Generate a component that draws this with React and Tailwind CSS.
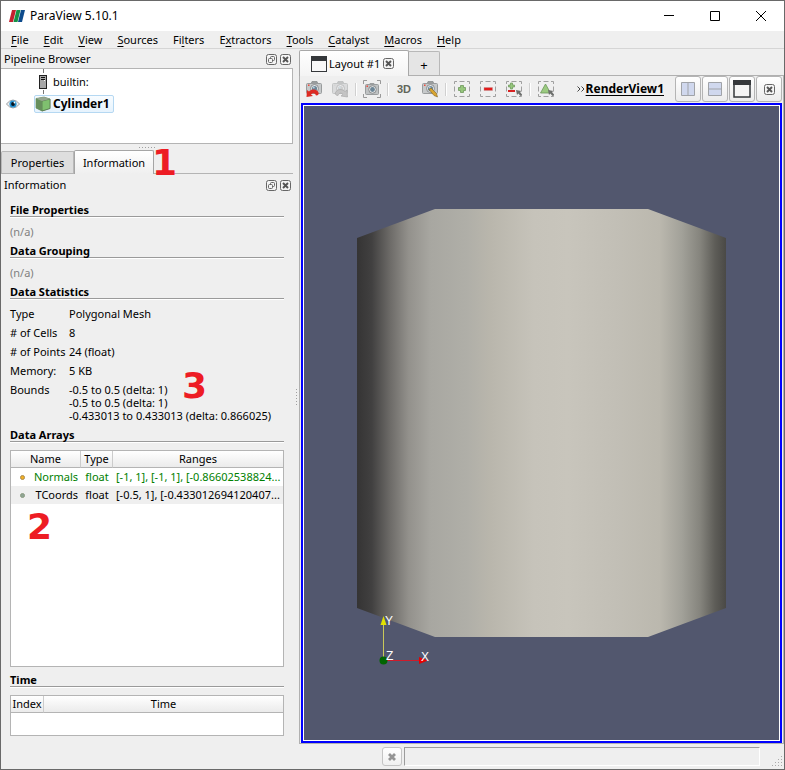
import React from 'react';

const menus = [
  ['', 'F', 'ile'],
  ['', 'E', 'dit'],
  ['', 'V', 'iew'],
  ['', 'S', 'ources'],
  ['Fi', 'l', 'ters'],
  ['E', 'x', 'tractors'],
  ['', 'T', 'ools'],
  ['', 'C', 'atalyst'],
  ['', 'M', 'acros'],
  ['', 'H', 'elp'],
];

const stats = [
  ['Type', 'Polygonal Mesh'],
  ['# of Cells', '8'],
  ['# of Points', '24 (float)'],
  ['Memory:', '5 KB'],
];

function CloseGlyph({ className = '' }) {
  return (
    <svg viewBox="0 0 11 11" className={`block size-[11px] ${className}`} aria-hidden="true">
      <rect x="0.5" y="0.5" width="10" height="10" rx="2" fill="#f4f4f4" stroke="#666" />
      <path d="M3 3l5 5M8 3l-5 5" stroke="#555" strokeWidth="1.9" />
    </svg>
  );
}

function FloatGlyph() {
  return (
    <svg viewBox="0 0 11 11" className="block size-[11px]" aria-hidden="true">
      <rect x="0.5" y="0.5" width="10" height="10" rx="2" fill="#f4f4f4" stroke="#666" />
      <rect x="4.5" y="2.5" width="4" height="4" rx="1" fill="none" stroke="#666" />
      <rect x="2.5" y="4.5" width="4" height="4" rx="1" fill="#f4f4f4" stroke="#666" />
    </svg>
  );
}

function DockTitle({ children }) {
  return (
    <div className="flex h-[18px] items-center pl-[3px] pr-0.5">
      <h2 className="flex-1">{children}</h2>
      <button aria-label={`Float ${children}`} className="mr-[3px]"><FloatGlyph /></button>
      <button aria-label={`Close ${children}`}><CloseGlyph /></button>
    </div>
  );
}

function Section({ children }) {
  return (
    <h3 className="h-[15px] shrink-0 border-b border-[#9a9a9a] text-[11px] leading-[16px] font-bold shadow-[0_1px_0_#fff]">
      {children}
    </h3>
  );
}

function Camera({ children, faded }) {
  return (
    <svg viewBox="0 0 18 18" className="size-[18px]" aria-hidden="true">
      <g opacity={faded ? 0.5 : 1}>
        <path d="M6 4l1-2.500h5l1 2.500z" fill="#9a9d9e" stroke="#838687" strokeWidth=".7" />
        <rect x="1.500" y="3.500" width="15" height="10" rx="1" fill="#c6c9ca" stroke="#999c9d" />
        <path d="M3 4.500h1.500V6H3z" fill={faded ? '#bbb' : '#ef4b3d'} />
        <circle cx="9.500" cy="8.500" r="4" fill="#e5e7e8" stroke="#8b8e8f" />
        <circle cx="9.500" cy="8.500" r="2.600" fill={faded ? '#aeb0b1' : '#6c8697'} />
        <circle cx="8.700" cy="7.600" r="1" fill="#b6d0df" />
      </g>
      {children}
    </svg>
  );
}

function Dashed({ children }) {
  return (
    <svg viewBox="0 0 16 16" className="size-[16px]" aria-hidden="true">
      <path
        d="M.5 3V.5H3M5.500 .5h5M13 .5h2.500V3M15.500 5.500v5M15.500 13v2.500H13M10.500 15.500h-5M3 15.500H.5V13M.5 10.500v-5"
        fill="none"
        stroke="#a0a0a0"
      />
      {children}
    </svg>
  );
}

function Tool({ label, children }) {
  return (
    <button aria-label={label} className="flex h-[26px] w-[26px] shrink-0 items-center justify-center">
      {children}
    </button>
  );
}

function Sep() {
  return <div className="mx-[2px] h-[13px] w-[2px] shrink-0 self-center border-l border-[#d0d0d0] bg-white" />;
}

function ViewButton({ label, children }) {
  return (
    <button
      aria-label={label}
      className="flex size-[26px] shrink-0 items-center justify-center rounded-[3px] border border-[#b4b4b4] bg-linear-to-b from-white to-[#ececec]"
    >
      {children}
    </button>
  );
}

function WindowGlyph() {
  return (
    <svg viewBox="0 0 18 18" className="size-[18px]" aria-hidden="true">
      <rect x="1" y="1" width="16" height="16" fill="#f5f5f5" stroke="#35383b" strokeWidth="1.500" />
      <path d="M0 0h18v5H0z" fill="#35383b" />
    </svg>
  );
}

function Grip({ vertical }) {
  return (
    <div className={vertical ? 'flex flex-col gap-[2px]' : 'flex gap-[2px]'}>
      {[0, 1, 2, 3, 4, 5].map((i) => (
        <span key={i} className="size-px bg-[#a0a0a0]" />
      ))}
    </div>
  );
}

const headCell =
  'h-[17px] border-b border-[#b4b4b4] bg-linear-to-b from-white to-[#ebebeb] p-0 text-center font-normal';
const mark = 'pointer-events-none absolute font-["DejaVu_Sans",sans-serif] text-[36px] leading-8 font-bold text-[#ed1c24]';

function TitleBar() {
  return (
    <header className="flex h-[30px] shrink-0 items-center bg-white pl-2">
      <svg viewBox="0 0 16 12" className="h-[12px] w-[16px]" aria-hidden="true">
        <path d="M3 0h4L4 12H0z" fill="#c3202f" />
        <path d="M7.500 0h4l-3 12h-4z" fill="#159347" />
        <path d="M12 0h4l-3 12H9z" fill="#0e4b8c" />
      </svg>
      <h1 className="ml-[5px] flex-1 text-[12px]">ParaView 5.10.1</h1>
      <button aria-label="Minimize" className="flex h-full w-[46px] items-center justify-center">
        <svg viewBox="0 0 10 10" className="size-[10px]"><path d="M0 4.500h10" stroke="#000" /></svg>
      </button>
      <button aria-label="Maximize" className="flex h-full w-[46px] items-center justify-center">
        <svg viewBox="0 0 10 10" className="size-[10px]"><path d="M.5.5h9v9h-9z" fill="none" stroke="#000" /></svg>
      </button>
      <button aria-label="Close" className="flex h-full w-[46px] items-center justify-center">
        <svg viewBox="0 0 10 10" className="size-[10px]"><path d="M0 0l10 10M10 0L0 10" stroke="#000" /></svg>
      </button>
    </header>
  );
}

function PipelineBrowser() {
  return (
    <section className="h-[76px] border border-[#b4b4b4] border-l-0 bg-white">
      <ul>
        <li className="flex h-[25px] flex-col pl-[33px]">
          <div className="ml-[9px] h-[4px] w-px shrink-0 bg-[#777]" />
          <div className="flex h-[17px] shrink-0 items-center">
            <svg viewBox="0 0 8 14" className="ml-[5px] h-[14px] w-[8px]" aria-hidden="true">
              <rect x=".5" y=".5" width="7" height="13" fill="#a8a8a8" stroke="#222" />
              <path d="M2 2.500h4M2 4.500h4" stroke="#111" />
              <path d="M5 5.500h1" stroke="#fff" />
            </svg>
            <span className="ml-[6px]">builtin:</span>
          </div>
          <div className="ml-[9px] h-[4px] w-px shrink-0 bg-[#777]" />
        </li>
        <li className="flex h-[19px] items-center">
          <button aria-label="Toggle visibility" className="ml-[5px]">
            <svg viewBox="0 0 14 10" className="block h-[10px] w-[14px]" aria-hidden="true">
              <path d="M.4 5Q7-3 13.600 5Q7 13 .4 5z" fill="#eef0f1" stroke="#888c90" strokeWidth=".8" />
              <circle cx="7" cy="5" r="3.600" fill="#2490cf" />
              <circle cx="7" cy="5" r="1.900" fill="#06121c" />
              <circle cx="8.500" cy="3.500" r=".9" fill="#fff" />
            </svg>
          </button>
          <div className="ml-[14px] flex h-[18px] items-center rounded-[2px] border border-[#b5d8f2] bg-linear-to-b from-[#f8fcff] to-[#e6f3fd] pr-[3px]">
            <svg viewBox="0 0 16 16" className="size-[16px]" aria-hidden="true">
              <path d="M1 2.500L9 1l6 2v9.500L7 15l-6-3z" fill="#71a764" stroke="#5d7d55" strokeWidth=".6" />
              <path d="M7 5l8-2v9.500L7 15z" fill="#7fc06f" stroke="#536f4c" strokeWidth=".7" />
              <path d="M1 2.500L7 5v10l-6-3z" fill="#668f5c" />
              <path d="M1 2.500L9 1l6 2-8 2z" fill="#96a58f" />
            </svg>
            <span className="ml-[2px] text-[12px] font-bold">Cylinder1</span>
          </div>
        </li>
      </ul>
    </section>
  );
}

function ArrayRow({ name, range, tone, dot }) {
  return (
    <tr className={`h-[18px] ${tone}`}>
      <td className="p-0">
        <div className="flex items-center justify-between pr-[3px] pl-[9px]">
          <span className={`size-[5px] rounded-full border ${dot}`} />
          {name}
        </div>
      </td>
      <td className="p-0 text-center">float</td>
      <td className="p-0 pl-[3px] whitespace-nowrap">{range}</td>
    </tr>
  );
}

function InformationPanel() {
  return (
    <section className="flex min-h-0 flex-1 flex-col px-[9px] pt-[8px] pb-[8px]">
      <Section>File Properties</Section>
      <p className="h-[26px] shrink-0 pt-[7px] leading-[15px] text-[#808080]">(n/a)</p>
      <Section>Data Grouping</Section>
      <p className="h-[26px] shrink-0 pt-[7px] leading-[15px] text-[#808080]">(n/a)</p>
      <Section>Data Statistics</Section>
      <div className="relative my-[5px] shrink-0">
        <dl className="grid grid-cols-[59px_1fr] leading-[19px]">
          {stats.map(([k, v]) => (
            <React.Fragment key={k}>
              <dt className="whitespace-nowrap">{k}</dt>
              <dd>{v}</dd>
            </React.Fragment>
          ))}
          <dt>Bounds</dt>
          <dd className="pt-[3px] leading-[13px]">
            -0.5 to 0.5 (delta: 1)
            <br />
            -0.5 to 0.5 (delta: 1)
            <br />
            -0.433013 to 0.433013 (delta: 0.866025)
          </dd>
        </dl>
        <span className={`${mark} top-[66px] left-[172px]`}>3</span>
      </div>
      <Section>Data Arrays</Section>
      <div className="relative mt-[8px] mb-[5px] min-h-0 flex-1 border border-[#b4b4b4] bg-white">
        <table className="w-full table-fixed border-separate border-spacing-0">
          <colgroup>
            <col className="w-[70px]" />
            <col className="w-[32px]" />
            <col />
          </colgroup>
          <thead>
            <tr>
              <th className={`${headCell} border-r border-r-[#ccc]`}>Name</th>
              <th className={`${headCell} border-r border-r-[#ccc]`}>Type</th>
              <th className={headCell}>Ranges</th>
            </tr>
          </thead>
          <tbody>
            <ArrayRow
              name="Normals"
              range="[-1, 1], [-1, 1], [-0.86602538824..."
              tone="text-[#008000]"
              dot="border-[#a88a50] bg-[#f3b021]"
            />
            <ArrayRow
              name="TCoords"
              range="[-0.5, 1], [-0.433012694120407..."
              tone="bg-[#efefef]"
              dot="border-[#8a9a80] bg-[#8fa595]"
            />
          </tbody>
        </table>
        <span className={`${mark} top-[60px] left-[16px]`}>2</span>
      </div>
      <Section>Time</Section>
      <div className="mt-[8px] h-[41px] shrink-0 border border-[#b4b4b4] bg-white">
        <table className="w-full table-fixed border-separate border-spacing-0">
          <thead>
            <tr>
              <th className={`${headCell} w-[33px] border-r border-r-[#ccc]`}>Index</th>
              <th className={headCell}>Time</th>
            </tr>
          </thead>
        </table>
      </div>
    </section>
  );
}

function Pointer() {
  return <path d="M10 9l5.500 1-1.500 1 2 2.500-1.500 1.500-2.200-2.500L11 14z" fill="#6d6f6d" />;
}

function ViewToolbar() {
  return (
    <div className="flex h-[27px] shrink-0 items-start pr-px">
      <Tool label="Undo camera">
        <Camera>
          <path d="M2 10l-.5 7 6.500-1-2-1.500c2-2 4-1.500 5 1 2.500 0 3-1.500 2.500-3-1.500-3.500-6.500-4-9.500-1z" fill="#dd2a22" />
        </Camera>
      </Tool>
      <Tool label="Redo camera">
        <Camera faded>
          <path d="M16 10l.5 7-6.500-1 2-1.500c-2-2-4-1.500-5 1-2.500 0-3-1.500-2.500-3 1.500-3.500 6.500-4 9.500-1z" fill="#c4c4c4" stroke="#a5a5a5" strokeWidth=".6" />
        </Camera>
      </Tool>
      <Sep />
      <Tool label="Capture screenshot">
        <svg viewBox="0 0 18 18" className="size-[18px]" aria-hidden="true">
          <path d="M.5 4V.5H4M14 .5h3.500V4M.5 14v3.500H4M14 17.500h3.500V14" fill="none" stroke="#999" />
          <path d="M6 5l1-2h4l1 2z" fill="#9a9d9e" />
          <rect x="2.500" y="4.500" width="13" height="10" rx="1" fill="#bfc2c3" stroke="#999c9d" />
          <path d="M3.500 5.500h1.500V7H3.500z" fill="#ef4b3d" />
          <circle cx="9.500" cy="9.500" r="3.800" fill="#e5e7e8" stroke="#8b8e8f" />
          <circle cx="9.500" cy="9.500" r="2.400" fill="#6c8697" />
        </svg>
      </Tool>
      <Sep />
      <Tool label="Change interaction mode">
        <span className='font-["Liberation_Sans",sans-serif] text-[11px] font-bold text-[#62665a]'>3D</span>
      </Tool>
      <Tool label="Adjust camera">
        <Camera>
          <path d="M8 9.500L10 8l5.500 5.500 1 3.500-3.500-1.500z" fill="#d9a52f" stroke="#806326" strokeWidth=".6" />
        </Camera>
      </Tool>
      <Sep />
      <Tool label="Add selection">
        <Dashed><path d="M6.500 4.500h3v2h2v3h-2v2h-3v-2h-2v-3h2z" fill="#96c77c" stroke="#6c975a" strokeWidth=".8" /></Dashed>
      </Tool>
      <Tool label="Subtract selection">
        <Dashed><path d="M4 6.500h8.500v3H4z" fill="#e21b1b" stroke="#b99" strokeWidth=".4" /></Dashed>
      </Tool>
      <Tool label="Toggle selection">
        <Dashed>
          <path d="M4.500 2h2v2h2v2h-2v2h-2V6h-2V4h2z" fill="#96c77c" stroke="#6c975a" strokeWidth=".7" />
          <path d="M2 9h7v2H2z" fill="#d82222" />
          <Pointer />
        </Dashed>
      </Tool>
      <Sep />
      <Tool label="Interactive select">
        <Dashed>
          <path d="M7.500 3l5 9h-10z" fill="#9bca80" stroke="#6c975a" strokeWidth=".8" />
          <Pointer />
        </Dashed>
      </Tool>
      <div className="flex h-[26px] flex-1 items-center justify-end pr-[11px]">
        <svg viewBox="0 0 8 6" className="mr-px h-[6px] w-[8px]" aria-hidden="true">
          <path d="M.5.5L3 3 .5 5.500M4.500.5L7 3 4.500 5.500" fill="none" stroke="#444" />
        </svg>
        <button className="text-[12px] leading-4 font-bold underline underline-offset-2">RenderView1</button>
      </div>
      <div className="flex gap-px">
        <ViewButton label="Split horizontally">
          <svg viewBox="0 0 14 14" className="size-[14px]"><path d="M.5.5h13v13H.5zM7 1v12" fill="#d0d8ee" stroke="#a0a3a8" /></svg>
        </ViewButton>
        <ViewButton label="Split vertically">
          <svg viewBox="0 0 14 14" className="size-[14px]"><path d="M.5.5h13v13H.5zM1 7h12" fill="#d0d8ee" stroke="#a0a3a8" /></svg>
        </ViewButton>
        <ViewButton label="Maximize view"><WindowGlyph /></ViewButton>
        <ViewButton label="Close view"><CloseGlyph /></ViewButton>
      </div>
    </div>
  );
}

function RenderView() {
  return (
    <div className="mr-px min-h-0 flex-1 border-2 border-[#0000fe] bg-white p-px">
      <svg viewBox="304 106 475 634" className="block h-full w-full bg-[#52576e]" role="img" aria-label="Cylinder render">
        <defs>
          <linearGradient id="shade">
            <stop offset="0" stopColor="#353434" />
            <stop offset=".04" stopColor="#414040" />
            <stop offset=".09" stopColor="#6d6b68" />
            <stop offset=".14" stopColor="#93918c" />
            <stop offset=".2" stopColor="#a8a7a1" />
            <stop offset=".3" stopColor="#b0afa8" />
            <stop offset=".36" stopColor="#b9b6ac" />
            <stop offset=".48" stopColor="#c6c3ba" />
            <stop offset=".57" stopColor="#c8c5bc" />
            <stop offset=".7" stopColor="#c2bfb6" />
            <stop offset=".82" stopColor="#bbb8ae" />
            <stop offset=".88" stopColor="#a2a199" />
            <stop offset=".93" stopColor="#85847d" />
            <stop offset=".97" stopColor="#5e5d58" />
            <stop offset="1" stopColor="#4a4946" />
          </linearGradient>
        </defs>
        <path d="M357 238L435 209H648L726 238V608L648 637H435L357 608z" fill="url(#shade)" />
        <path d="M383.500 658V625" stroke="#c9c85a" />
        <path d="M380.500 625l3-9 3 9z" fill="#e2e200" />
        <path d="M386 660.500h34" stroke="#d01b2b" />
        <path d="M419 657l9 3.500-9 3.500z" fill="#e60000" />
        <circle cx="383.500" cy="660.500" r="4" fill="#006400" />
        <g fill="#fff" fontFamily="Liberation Sans, sans-serif" fontSize="12">
          <text x="385" y="625">Y</text>
          <text x="386" y="660">Z</text>
          <text x="421" y="661">X</text>
        </g>
      </svg>
    </div>
  );
}

export default function App() {
  return (
    <div className='flex h-screen flex-col border border-[#696969] bg-[#efefef] font-["Noto_Sans",sans-serif] text-[11px] leading-[14px] text-black'>
      <TitleBar />
      <nav className="flex h-[18px] shrink-0 items-center gap-[15px] border-b border-[#d5d5d5] pl-[10px]">
        {menus.map(([a, b, c]) => (
          <button key={b + c} className="whitespace-nowrap">
            {a}<span className="underline underline-offset-2">{b}</span>{c}
          </button>
        ))}
      </nav>
      <main className="flex min-h-0 flex-1">
        <aside className="flex w-[292px] shrink-0 flex-col pt-px">
          <DockTitle>Pipeline Browser</DockTitle>
          <PipelineBrowser />
          <div className="flex h-[6px] items-center justify-center"><Grip /></div>
          <div className="relative flex h-[24px] shrink-0 items-end border-b border-[#b4b4b4]" role="tablist">
            <button role="tab" aria-selected="false" className="h-[22px] w-[73px] rounded-tl-[2px] border border-b-0 border-[#b8b8b8] bg-[#dedede] pt-px">Properties</button>
            <button role="tab" aria-selected="true" className="-mb-px h-[24px] w-[80px] rounded-t-[2px] border border-b-0 border-[#a5a5a5] bg-linear-to-b from-white to-[#efefef]">Information</button>
            <span className={`${mark} -top-[3px] left-[151px]`}>1</span>
          </div>
          <div className="pt-[2px]"><DockTitle>Information</DockTitle></div>
          <InformationPanel />
        </aside>
        <div className="flex w-[6px] shrink-0 items-center justify-center"><Grip vertical /></div>
        <div className="flex min-w-0 flex-1 flex-col pt-px">
          <div className="flex h-[26px] shrink-0 items-end border-b border-[#b0b0b0]">
            <div className="-mb-px flex h-[26px] w-[110px] items-center rounded-t-[2px] border border-b-0 border-[#a8a8a8] bg-linear-to-b from-white to-[#f4f4f4] pl-[11px]">
              <svg viewBox="0 0 16 16" className="size-[16px]" aria-hidden="true">
                <rect x=".5" y=".5" width="15" height="15" fill="#f8f8f8" stroke="#35383b" />
                <path d="M0 0h16v5H0z" fill="#35383b" />
              </svg>
              <button className="ml-[2px] text-[11px] whitespace-nowrap">Layout #1</button>
              <button aria-label="Close layout" className="ml-[3px]"><CloseGlyph /></button>
            </div>
            <button aria-label="New layout" className="h-[24px] w-[31px] rounded-tr-[2px] border border-b-0 border-l-0 border-[#b8b8b8] bg-[#e5e5e5] pt-[2px] text-[13px]">+</button>
          </div>
          <div className="flex min-h-0 flex-1 flex-col border-r border-b border-l border-[#b0b0b0] pl-px">
            <ViewToolbar />
            <RenderView />
          </div>
        </div>
      </main>
      <footer className="flex h-[25px] shrink-0 items-center pl-[381px]">
        <button aria-label="Abort" className="flex h-[19px] w-[20px] shrink-0 items-center justify-center rounded-[3px] border border-[#c4c4c4] bg-linear-to-b from-white to-[#f0f0f0]">
          <svg viewBox="0 0 8 8" className="size-[8px]"><path d="M1 1l6 6M7 1L1 7" stroke="#949494" strokeWidth="2.800" /></svg>
        </button>
        <div role="progressbar" aria-label="Progress" className="ml-[2px] h-[19px] flex-1 border border-t-[#9c9c9c] border-r-white border-b-white border-l-[#9c9c9c]" />
        <div className="flex w-[24px] items-end justify-end self-stretch pr-px pb-[2px]">
          <svg viewBox="0 0 11 11" className="size-[11px]" aria-hidden="true">
            <path d="M9 0h1v1H9zM6 3h1v1H6zM9 3h1v1H9zM3 6h1v1H3zM6 6h1v1H6zM9 6h1v1H9zM0 9h1v1H0zM3 9h1v1H3zM6 9h1v1H6zM9 9h1v1H9z" fill="#aaa" />
          </svg>
        </div>
      </footer>
    </div>
  );
}
